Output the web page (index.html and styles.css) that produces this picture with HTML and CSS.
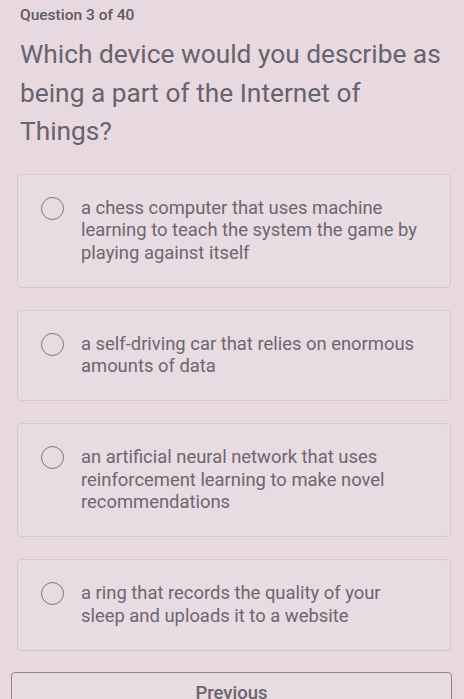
FILE: index.html
```html
<!DOCTYPE html>
<html lang="en">
<head>
<meta charset="utf-8">
<title>Question 3 of 40</title>
<link rel="stylesheet" href="styles.css">
</head>
<body>
<main class="quiz">
  <div class="counter">Question 3 of 40</div>
  <h1 class="question">Which device would you describe as being a part of the Internet of Things?</h1>
  <ul class="options">
    <li class="option"><span class="radio"></span><span class="label">a chess computer that uses machine learning to teach the system the game by playing against itself</span></li>
    <li class="option"><span class="radio"></span><span class="label">a self-driving car that relies on enormous amounts of data</span></li>
    <li class="option"><span class="radio"></span><span class="label">an artificial neural network that uses reinforcement learning to make novel recommendations</span></li>
    <li class="option"><span class="radio"></span><span class="label">a ring that records the quality of your sleep and uploads it to a website</span></li>
  </ul>
  <button class="prev">Previous</button>
</main>
</body>
</html>
```

FILE: styles.css
```css
html, body {
  margin: 0;
  padding: 0;
  background: #e7d9df;
}
body {
  font-family: Roboto, "Liberation Sans", sans-serif;
  color: #6c6770;
  overflow: hidden;
  height: 699px;
}
.quiz {
  padding: 5px 13px 0 17px;
}
.counter {
  font-size: 15.5px;
  line-height: 20px;
  font-weight: 500;
  color: #5f5a63;
  padding-left: 3px;
}
.question {
  margin: 10px 0 23px 0;
  padding: 0 10px 0 3px;
  font-size: 26.3px;
  line-height: 38.5px;
  font-weight: 400;
  color: #68636c;
}
.options {
  list-style: none;
  margin: 0;
  padding: 0;
  display: flex;
  flex-direction: column;
  gap: 22px;
}
.option {
  display: flex;
  align-items: flex-start;
  gap: 17px;
  padding: 22px 20px 22.5px 23px;
  border: 1px solid #d3c7cd;
  border-radius: 4px;
  background: #e8dbe1;
}
.radio {
  flex: none;
  width: 21px;
  height: 21px;
  border: 1.6px solid #7a757c;
  border-radius: 50%;
}
.label {
  font-size: 18.4px;
  line-height: 22.5px;
  max-width: 344px;
}
.prev {
  display: block;
  margin: 21px 0 0 -6px;
  width: 441px;
  border: 1.5px solid #8e848b;
  border-radius: 4px;
  background: #e8dbe1;
  font-family: Roboto, "Liberation Sans", sans-serif;
  font-size: 18.5px;
  font-weight: 500;
  color: #6a656d;
  padding: 9px 0 18px 0;
  text-align: center;
  line-height: 22px;
}
```
